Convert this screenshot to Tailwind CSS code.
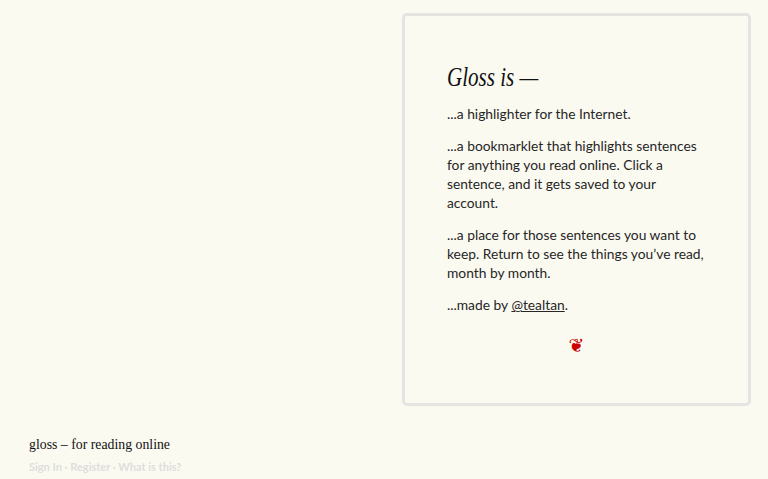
<!doctype html>
<html lang="en">
<head>
    <meta charset="utf-8">
    <title>Gloss</title>
    <script src="https://cdn.jsdelivr.net/npm/@tailwindcss/browser@4"></script>
</head>
<body class="h-[479px] overflow-hidden bg-[#fbfaf1] text-[#262626] antialiased font-['Lato',sans-serif]">
    <main class="flex justify-end pt-[13px] pr-[17px]">
        <section class="w-[349px] h-[393px] border-[3px] border-[#e4e4e2] rounded-[5px] pt-[43px] pl-[42px] pr-[40px]">
            <h1 class="font-['Liberation_Serif',serif] italic text-[27px] leading-[36px] mb-[9px] text-[#111] origin-left scale-x-[0.78]">Gloss is —</h1>
            <p class="text-[13.8px] leading-[19px] mb-[13px]">...a highlighter for the Internet.</p>
            <p class="text-[13.8px] leading-[19px] mb-[13px]">...a bookmarklet that highlights sentences for anything you read online. Click a sentence, and it gets saved to your account.</p>
            <p class="text-[13.8px] leading-[19px] mb-[13px]">...a place for those sentences you want to keep. Return to see the things you’ve read, month by month.</p>
            <p class="text-[13.8px] leading-[19px]">...made by <a href="#" class="underline">@tealtan</a>.</p>
            <div class="mt-[19px] text-center text-[#c00] text-[19px] leading-[24px] font-['DejaVu_Sans',sans-serif] pr-[2px]">❦</div>
        </section>
    </main>
    <footer class="pl-[29px] pt-[26px]">
        <div class="font-['Liberation_Serif',serif] text-[15.5px] leading-[24px] text-[#111] origin-left scale-x-[0.89]">gloss – for reading online</div>
        <nav class="text-[11px] leading-[16px] font-bold text-[#dededc] mt-[3px]">
            <a href="#">Sign In</a> · <a href="#">Register</a> · <a href="#">What is this?</a>
        </nav>
    </footer>
</body>
</html>
